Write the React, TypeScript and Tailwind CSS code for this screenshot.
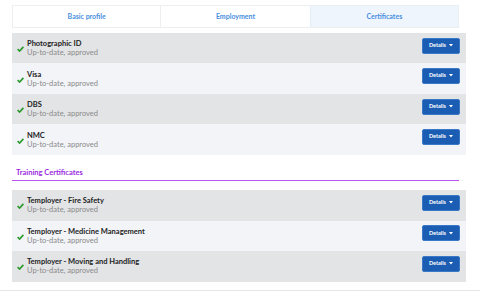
import React from "react";

const Check = () => (
  <svg width="7" height="6" viewBox="0 0 7 6" className="shrink-0 mt-[2px]">
    <path d="M0.6 3.2 L2.6 5.1 L6.4 0.9" fill="none" stroke="#2b9a2b" strokeWidth="1.6" />
  </svg>
);

const Row = ({ title, dark, h }: { title: string; dark: boolean; h: string }) => (
  <div className={`flex items-center justify-between pl-[5px] pr-[6px] ${h} ${dark ? "bg-[#e3e4e6]" : "bg-[#f2f4f8]"}`}>
    <div className="flex items-center gap-[3px]">
      <Check />
      <div className="flex flex-col leading-[9px]">
        <span className="text-[7.5px] font-bold text-[#222]">{title}</span>
        <span className="text-[7.5px] text-[#8a8a8a]">Up-to-date, approved</span>
      </div>
    </div>
    <button className="self-start mt-[4.5px] w-[38px] h-[16px] rounded-[2px] bg-[#1a5db3] border border-[#3a78c8] text-white text-[5.5px] font-bold flex items-center justify-center gap-[3px]">
      Details
      <svg width="4" height="3" viewBox="0 0 4 3"><path d="M0 0 H4 L2 2.4 Z" fill="white" /></svg>
    </button>
  </div>
);

export default function App() {
  return (
    <div className="w-[480px] h-[297px] bg-white font-['Lato',sans-serif] flex flex-col">
      <div className="pl-[12px] pr-[14px] pt-[5px] flex-1">
        <div className="mr-[7px] h-[23px] grid grid-cols-3 border border-[#eceef0] text-[7px] font-bold text-[#4a8fe0]">
          <div className="flex items-center justify-center border-r border-[#eceef0]">Basic profile</div>
          <div className="flex items-center justify-center">Employment</div>
          <div className="flex items-center justify-center bg-[#eef5fd] border-l border-[#e6ecf3]">Certificates</div>
        </div>
        <div className="mt-[5px] flex flex-col">
          <Row title="Photographic ID" dark h="h-[30px]" />
          <Row title="Visa" dark={false} h="h-[31px]" />
          <Row title="DBS" dark h="h-[30px]" />
          <Row title="NMC" dark={false} h="h-[31px]" />
        </div>
        <div className="mt-[13px] mr-[7px] border-b-[1.5px] border-[#b854f0]">
          <div className="pl-[4px] pb-[3px] text-[7.5px] font-bold text-[#9b2be0] leading-[9px]">Training Certificates</div>
        </div>
        <div className="mt-[9px] flex flex-col">
          <Row title="Temployer - Fire Safety" dark h="h-[30.5px]" />
          <Row title="Temployer - Medicine Management" dark={false} h="h-[30.5px]" />
          <Row title="Temployer - Moving and Handling" dark h="h-[30.5px]" />
        </div>
      </div>
      <div className="h-[7px] border-t border-[#e6e6e6]" />
    </div>
  );
}
